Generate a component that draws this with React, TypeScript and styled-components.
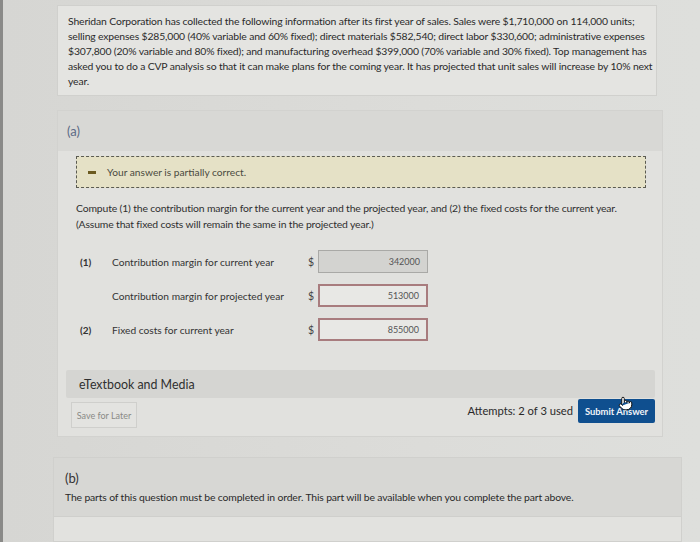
import React from "react";
import styled, { createGlobalStyle } from "styled-components";
import { Pointer } from "lucide-react";

const Global = createGlobalStyle`
  html, body { margin: 0; padding: 0; }
  body {
    width: 700px; height: 542px; overflow: hidden;
    background: #d9d9d6;
    font-family: Lato, "Open Sans", sans-serif;
    color: #2f2f2f;
  }
`;

const Page = styled.div`
  width: 700px;
  height: 542px;
  box-sizing: border-box;
  border-left: 3px solid #8a8a88;
  background: linear-gradient(90deg, #d6d6d3 0%, #dcdcd9 60%, #dedfdc 100%);
  padding: 5px 37px 0 54px;
  display: flex;
  flex-direction: column;
`;

const Intro = styled.div`
  background: #e4e4e1;
  border: 1px solid #d0d0cd;
  padding: 8px 12px 6px 10px;
  font-size: 10.4px;
  line-height: 15px;
  letter-spacing: -0.15px;
  color: #2a2a2a;
  white-space: nowrap;
  margin-right: 6px;
`;

const Section = styled.div`
  margin-top: 14px;
  border: 1px solid #d2d2cf;
  background: #e1e1de;
  display: flex;
  flex-direction: column;
`;

const SectionHead = styled.div<{ $h: number }>`
  height: ${(p) => p.$h}px;
  background: #d8d8d5;
  display: flex;
  align-items: center;
  padding-left: 9px;
  font-size: 13px;
  color: #5c6a86;
`;

const SectionBody = styled.div`
  padding: 5px 16px 8px 18px;
  display: flex;
  flex-direction: column;
`;

const Warning = styled.div`
  height: 32px;
  box-sizing: border-box;
  border: 1.5px dashed #5b5b52;
  background: #e5e1c6;
  display: flex;
  align-items: center;
  padding-left: 11px;
  gap: 11px;
  font-size: 10.2px;
  color: #4a4a40;
`;

const Minus = styled.span`
  width: 8px;
  height: 3px;
  background: #6b5a20;
  display: inline-block;
`;

const Prompt = styled.p`
  margin: 12px 0 0 0;
  font-size: 10.4px;
  line-height: 16px;
  letter-spacing: -0.15px;
  color: #2f2f2f;
`;

const Rows = styled.div`
  margin-top: 18px;
  display: flex;
  flex-direction: column;
  gap: 11px;
  padding-left: 4px;
`;

const Row = styled.div`
  display: grid;
  grid-template-columns: 32px 196px 10px 110px;
  align-items: center;
  height: 23px;
  font-size: 10.2px;
  color: #333;
`;

const Num = styled.span`
  font-weight: 700;
  font-size: 10px;
`;

const Dollar = styled.span`
  font-size: 10.5px;
  color: #444;
`;

const Field = styled.div<{ $state: "ok" | "bad" }>`
  height: 23px;
  box-sizing: border-box;
  border: ${(p) => (p.$state === "ok" ? "1px solid #a9a9a6" : "2px solid #a87c7e")};
  background: ${(p) => (p.$state === "ok" ? "#d3d3d0" : "#e8e8e5")};
  display: flex;
  align-items: center;
  justify-content: flex-end;
  padding-right: 7px;
  font-size: 9px;
  color: #555;
`;

const Media = styled.div`
  margin-top: 29px;
  margin-left: -10px;
  margin-right: -9px;
  height: 28px;
  background: #d5d5d2;
  border-radius: 2px;
  display: flex;
  align-items: center;
  padding-left: 13px;
  font-size: 12.4px;
  color: #2f2f2f;
`;

const Actions = styled.div`
  margin-left: -5px;
  margin-right: -9px;
  margin-top: 1px;
  display: flex;
  align-items: flex-start;
`;

const SaveBtn = styled.div`
  width: 66px;
  height: 26px;
  margin-top: 3px;
  box-sizing: border-box;
  border: 1px solid #cfcfcc;
  background: #e3e3e0;
  display: flex;
  align-items: center;
  justify-content: center;
  font-size: 9px;
  color: #8a8a86;
`;

const Spacer = styled.div`
  flex: 1;
`;

const Attempts = styled.span`
  font-size: 11.2px;
  color: #2a2a2a;
  margin-top: 5px;
  margin-right: 5px;
`;

const Submit = styled.div`
  position: relative;
  width: 77px;
  height: 24px;
  background: #0f4f8f;
  border-radius: 2px;
  color: #f2f4f8;
  font-size: 9.4px;
  font-weight: 700;
  display: flex;
  align-items: center;
  justify-content: center;
`;

const Hand = styled.span`
  position: absolute;
  left: 40px;
  top: -3px;
  display: flex;
  color: #111;
`;

const SectionB = styled.div`
  margin: 20px -19px 0 -4px;
  border: 1px solid #d0d0cd;
  background: #dededb;
  display: flex;
  flex-direction: column;
`;

const BHead = styled.div`
  background: #d7d7d4;
  padding: 12px 11px 13px 11px;
  display: flex;
  flex-direction: column;
  gap: 5px;
`;

const BLabel = styled.span`
  font-size: 13px;
  color: #333;
`;

const BText = styled.span`
  font-size: 10.4px;
  letter-spacing: -0.15px;
  color: #2a2a2a;
`;

const BFoot = styled.div`
  height: 24px;
  background: #e2e2df;
  border-top: 1px solid #cfcfcc;
`;

type RowData = { num?: string; label: string; value: string; state: "ok" | "bad" };

const rows: RowData[] = [
  { num: "(1)", label: "Contribution margin for current year", value: "342000", state: "ok" },
  { label: "Contribution margin for projected year", value: "513000", state: "bad" },
  { num: "(2)", label: "Fixed costs for current year", value: "855000", state: "bad" },
];

export default function App() {
  return (
    <>
      <Global />
      <Page>
        <Intro>
          Sheridan Corporation has collected the following information after its first year of sales. Sales were $1,710,000 on 114,000 units;
          <br />
          selling expenses $285,000 (40% variable and 60% fixed); direct materials $582,540; direct labor $330,600; administrative expenses
          <br />
          $307,800 (20% variable and 80% fixed); and manufacturing overhead $399,000 (70% variable and 30% fixed). Top management has
          <br />
          asked you to do a CVP analysis so that it can make plans for the coming year. It has projected that unit sales will increase by 10% next
          <br />
          year.
        </Intro>

        <Section>
          <SectionHead $h={40}>(a)</SectionHead>
          <SectionBody>
            <Warning>
              <Minus />
              <span>Your answer is partially correct.</span>
            </Warning>
            <Prompt>
              Compute (1) the contribution margin for the current year and the projected year, and (2) the fixed costs for the current year.
              <br />
              (Assume that fixed costs will remain the same in the projected year.)
            </Prompt>
            <Rows>
              {rows.map((r) => (
                <Row key={r.label}>
                  <Num>{r.num ?? ""}</Num>
                  <span>{r.label}</span>
                  <Dollar>$</Dollar>
                  <Field $state={r.state}>{r.value}</Field>
                </Row>
              ))}
            </Rows>
            <Media>eTextbook and Media</Media>
            <Actions>
              <SaveBtn>Save for Later</SaveBtn>
              <Spacer />
              <Attempts>Attempts: 2 of 3 used</Attempts>
              <Submit>
                Submit Answer
                <Hand>
                  <Pointer size={15} fill="#ffffff" strokeWidth={1.6} />
                </Hand>
              </Submit>
            </Actions>
          </SectionBody>
        </Section>

        <SectionB>
          <BHead>
            <BLabel>(b)</BLabel>
            <BText>
              The parts of this question must be completed in order. This part will be available when you complete the part above.
            </BText>
          </BHead>
          <BFoot />
        </SectionB>
      </Page>
    </>
  );
}
